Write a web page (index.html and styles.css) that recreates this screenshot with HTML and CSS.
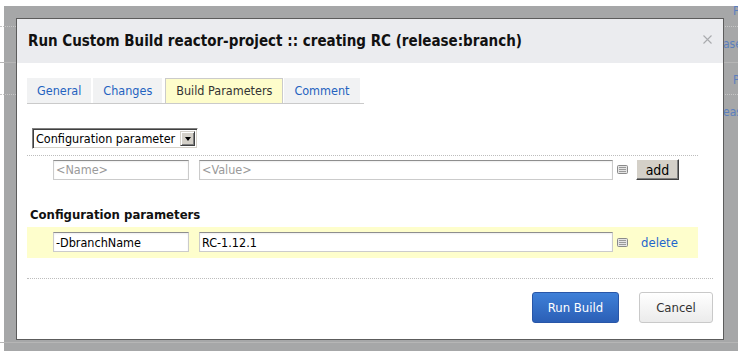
FILE: index.html
```html
<!DOCTYPE html>
<html>
<head>
<meta charset="utf-8">
<title>Run Custom Build</title>
<link rel="stylesheet" href="styles.css">
</head>
<body>
<div class="page">
  <div class="page-row r1"><span class="peek-p">P</span></div>
  <div class="page-row r2"><span class="peek-s">ase</span></div>
  <div class="page-row r3"><span class="peek-p">P</span></div>
  <div class="page-row r4"><span class="peek-s">eas</span></div>
</div>
<div class="overlay"></div>
<div class="dialog">
  <div class="dlg-head">
    <h1 class="dlg-title">Run Custom Build reactor-project :: creating RC (release:branch)</h1>
    <span class="close"><svg width="9" height="9" viewBox="0 0 9 9"><path d="M0.5 0.5L8.5 8.5M8.5 0.5L0.5 8.5" stroke="#a9abae" stroke-width="1.1" fill="none"/></svg></span>
  </div>
  <div class="dlg-body">
    <div class="tabs">
      <a class="tab">General</a>
      <a class="tab">Changes</a>
      <a class="tab active">Build Parameters</a>
      <a class="tab">Comment</a>
    </div>
    <div class="form">
      <div class="chooser">
        <div class="select"><span class="select-text">Configuration parameter</span><span class="select-btn"><span class="tri"></span></span></div>
      </div>
      <div class="param-row">
        <input class="field name" placeholder="&lt;Name&gt;">
        <input class="field value" placeholder="&lt;Value&gt;">
        <svg class="edit-icon" width="11" height="9" viewBox="0 0 11 9"><rect x="0.5" y="0.5" width="10" height="8" rx="1" fill="#e4e4e4" stroke="#8a8a8a"/><path d="M2 2.5H9M2 4.5H9M2 6.5H9" stroke="#9a9a9a"/></svg>
        <button class="add-btn">add</button>
      </div>
      <h2 class="section">Configuration parameters</h2>
      <div class="param-row existing">
        <input class="field name" value="-DbranchName">
        <input class="field value" value="RC-1.12.1">
        <svg class="edit-icon" width="11" height="9" viewBox="0 0 11 9"><rect x="0.5" y="0.5" width="10" height="8" rx="1" fill="#e4e4e4" stroke="#8a8a8a"/><path d="M2 2.5H9M2 4.5H9M2 6.5H9" stroke="#9a9a9a"/></svg>
        <a class="delete">delete</a>
      </div>
    </div>
    <div class="footer">
      <button class="btn primary">Run Build</button>
      <button class="btn cancel">Cancel</button>
    </div>
  </div>
</div>
</body>
</html>
```
FILE: styles.css
```css
* { box-sizing: border-box; }
html, body { margin: 0; padding: 0; }
body {
  background: #fff;
  width: 738px;
  height: 353px;
  overflow: hidden;
  position: relative;
  font-family: "DejaVu Sans Condensed", "DejaVu Sans", sans-serif;
  font-stretch: condensed;
}

/* underlying page */
.page { position: relative; z-index: 2; margin-top: -6px; }
.page-row {
  border-bottom: 1px dotted #c6c6c6;
  padding-top: 10px;
  font-size: 12px;
  line-height: 14px;
  color: #5b7fbe;
  white-space: nowrap;
  overflow: hidden;
}
.r1 { height: 33px; }
.r2 { height: 36px; border-bottom: 1px solid #b6b6b6; }
.r3 { height: 32px; }
.r4 { height: 248px; border-bottom: 1px solid #b6b6b6; }
.peek-p { padding-left: 733px; }
.peek-s { padding-left: 723px; }

.overlay {
  position: absolute;
  left: 4px; top: 6px; right: 0; bottom: 2px;
  background: rgba(32, 34, 38, 0.4);
  z-index: 1;
}

/* dialog */
.dialog {
  position: absolute;
  left: 16px; top: 18px;
  width: 708px; height: 322px;
  border: 1px solid #5c5c5c;
  background: #fff;
  z-index: 3;
  display: flex;
  flex-direction: column;
}
.dlg-head {
  height: 44px;
  flex: none;
  background: #ebecef;
  display: flex;
  align-items: center;
  justify-content: space-between;
  padding: 0 11px 0 11px;
}
.dlg-title {
  margin: 0;
  font-size: 15px;
  font-weight: bold;
  color: #111;
  white-space: nowrap;
}
.close { display: flex; margin-top: -3px; }

.dlg-body { padding: 15px 10px 0 10px; }

.tabs {
  display: flex;
  width: fit-content;
  gap: 2px;
  border-bottom: 1px solid #cacaca;
  padding-right: 4px;
}
.tab {
  height: 25px;
  line-height: 25px;
  padding: 0 10px;
  background: #f1f2f3;
  color: #2462c0;
  font-size: 12.5px;
}
.tab.active {
  background: #fefdcb;
  border: 1px solid #cbcbcb;
  border-bottom: none;
  color: #333;
  line-height: 24px;
  margin-left: 1px;
  margin-right: -1px;
}

.form { width: 671px; margin-top: 24px; }
.chooser {
  padding: 0 0 6px 5px;
  border-bottom: 1px dotted #bdbdbd;
}
.select {
  display: flex;
  align-items: center;
  justify-content: space-between;
  width: 166px;
  height: 21px;
  border: 1px solid;
  border-color: #808080 #fff #fff #808080;
  box-shadow: inset 1px 1px #404040, inset -1px -1px #d4d0c8;
  padding: 0 2px 0 3px;
  font-size: 12.5px;
  color: #000;
}
.select-btn {
  width: 15px;
  height: 15px;
  background: #d4d0c8;
  border: 1px solid;
  border-color: #d4d0c8 #404040 #404040 #d4d0c8;
  box-shadow: inset 1px 1px #fff, inset -1px -1px #808080;
  display: flex;
  align-items: center;
  justify-content: center;
}
.tri {
  width: 0; height: 0;
  border-left: 3.5px solid transparent;
  border-right: 3.5px solid transparent;
  border-top: 4px solid #000;
}

.param-row {
  display: flex;
  align-items: center;
  padding: 3px 0 0 26px;
}
.field {
  height: 20px;
  border: 1px solid #cbcbcb;
  border-top-color: #8e8e8e;
  box-shadow: inset 0 1px 2px rgba(0,0,0,0.07);
  padding: 0 2px;
  font-family: inherit;
  font-stretch: condensed;
  font-size: 12.5px;
  color: #000;
  background: #fff;
  outline: none;
}
.field::placeholder { color: #9a9a9a; }
.field.name { width: 136px; }
.field.value { width: 414px; margin-left: 10px; }
.edit-icon { margin-left: 4px; flex: none; }
.add-btn {
  margin-left: 8px;
  width: 43px;
  height: 21px;
  padding: 0;
  background: #d4d0c8;
  border: 1px solid;
  border-color: #fff #404040 #404040 #fff;
  box-shadow: inset -1px -1px #808080;
  font-family: inherit;
  font-stretch: condensed;
  font-size: 14px;
  color: #000;
}
.section {
  margin: 27px 0 4px 3px;
  font-size: 13px;
  line-height: 16px;
  font-weight: bold;
  color: #111;
}
.param-row.existing {
  background: #fefecc;
  height: 31px;
  padding: 0 0 1px 26px;
}
.delete {
  margin-left: 13px;
  color: #1f66cc;
  font-size: 13px;
}

.footer {
  margin-top: 20px;
  border-top: 1px dotted #bdbdbd;
  padding-top: 13px;
  display: flex;
  justify-content: flex-end;
  gap: 20px;
}
.btn {
  height: 31px;
  border-radius: 3px;
  font-family: inherit;
  font-stretch: condensed;
  font-size: 13px;
  padding: 0;
}
.btn.primary {
  width: 87px;
  background: linear-gradient(#3f80d8, #2b5fb6);
  border: 1px solid #2856a8;
  color: #fff;
}
.btn.cancel {
  width: 74px;
  background: linear-gradient(#ffffff, #ebebeb);
  border: 1px solid #c9c9c9;
  color: #333;
}
```
